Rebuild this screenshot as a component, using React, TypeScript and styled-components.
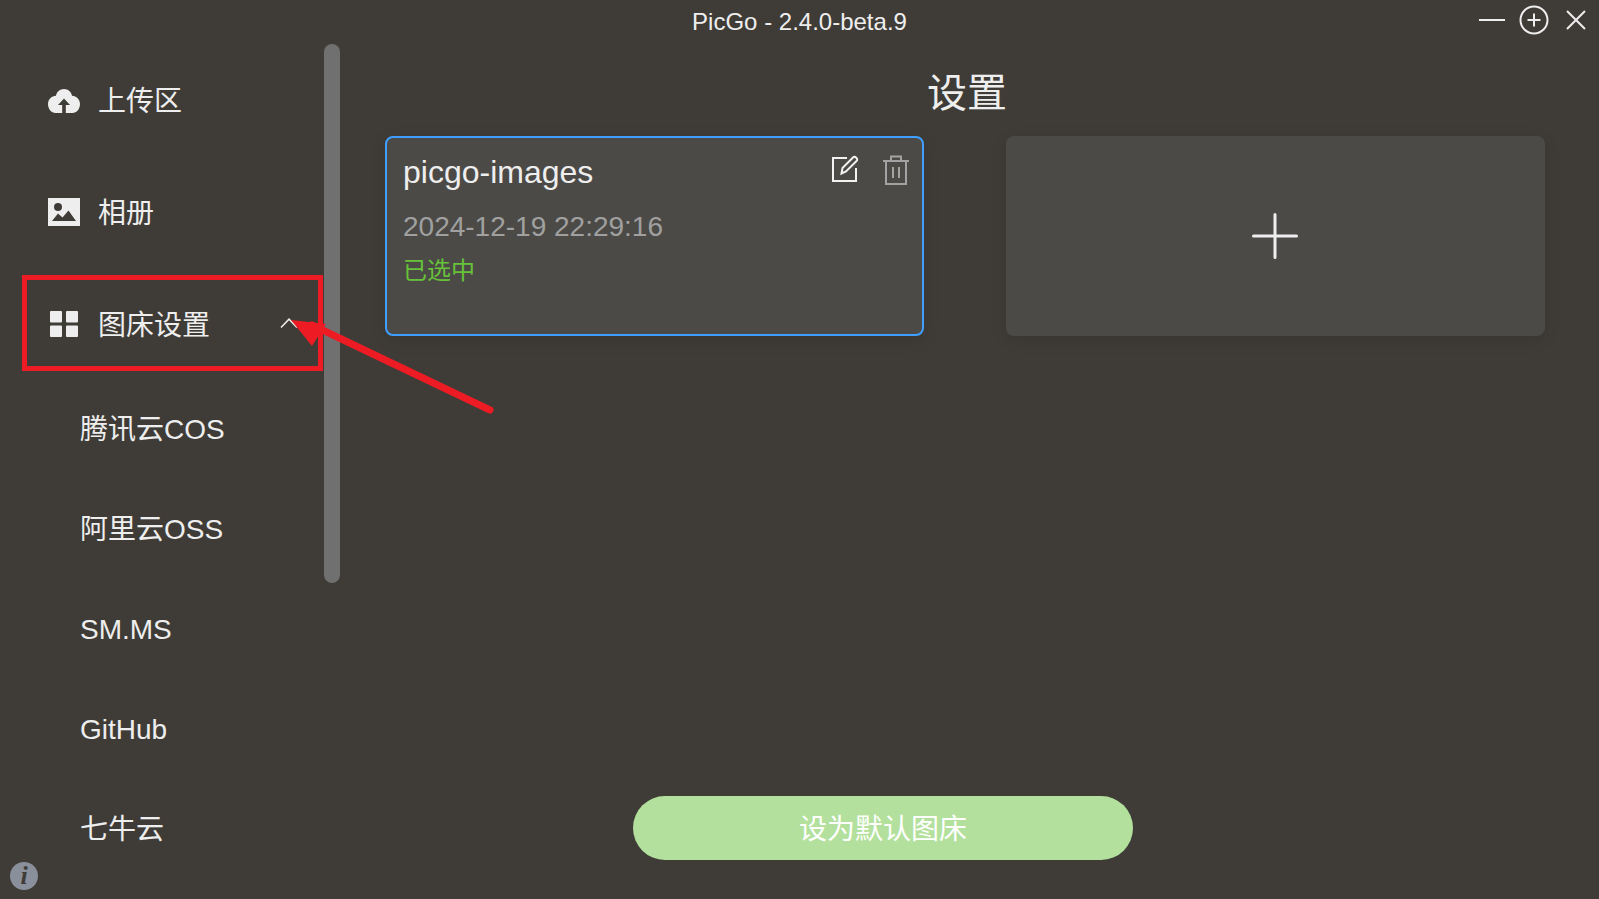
import styled, { createGlobalStyle } from 'styled-components';

const SANS = `"Liberation Sans", "Noto Sans CJK SC", sans-serif`;

const GlobalStyle = createGlobalStyle`
  html, body {
    margin: 0;
    padding: 0;
    background: #3f3c37;
  }

  * {
    box-sizing: border-box;
  }
`;

const PROVIDERS = ['腾讯云COS', '阿里云OSS', 'SM.MS', 'GitHub', '七牛云'];

const CloudIcon = () => (
  <svg width="32" height="32" viewBox="0 0 32 32" fill="#eee">
    <path d="M16 6c-4 0-7.300 2.800-8 6.700C3.500 13.100 0 16.400 0 21c0 5 3.400 9 7.500 9h6.700v-8H10l6-6.500 6 6.500h-4.200v8h6.700c4.100 0 7.500-4 7.500-9 0-4.600-3.500-7.900-8-8.300-.7-3.900-4-6.700-8-6.700z" />
  </svg>
);

const PictureIcon = () => (
  <svg width="32" height="32" viewBox="0 0 32 32">
    <path
      fill="#eee"
      fillRule="evenodd"
      d="M0 3h32v28H0zM4 26h24l-7.500-10.500-6 7-4.500-4zM10 8a4 4 0 1 0 0 8 4 4 0 0 0 0-8z"
    />
  </svg>
);

const GridIcon = () => (
  <svg width="32" height="32" viewBox="0 0 32 32" fill="#eee">
    <rect x="2" y="4" width="12" height="11.500" rx="1" />
    <rect x="18" y="4" width="12" height="11.500" rx="1" />
    <rect x="2" y="18.500" width="12" height="11.500" rx="1" />
    <rect x="18" y="18.500" width="12" height="11.500" rx="1" />
  </svg>
);

const Chevron = () => (
  <svg width="18" height="10" viewBox="0 0 18 10" fill="none" stroke="#eee" strokeWidth="1.500">
    <path d="M1 9.500 9 1.200l8 8.300" />
  </svg>
);

const EditIcon = () => (
  <svg width="28" height="28" viewBox="0 0 28 28" fill="none" stroke="#f2f2f2" strokeWidth="2">
    <path d="M16 3H2v23h23V13" />
    <path d="M10.500 18.500 11.500 13 22 2.500a2 2 0 0 1 3 0l.5.500a2 2 0 0 1 0 3L15 16.500z" />
  </svg>
);

const TrashIcon = () => (
  <svg width="26" height="30" viewBox="0 0 26 30" fill="none" stroke="#a3a3a3" strokeWidth="2">
    <path d="M0 6h26M8 6V1.500h10V6M3 6v23h20V6M10 12v11M16 12v11" />
  </svg>
);

const MinusIcon = () => (
  <svg width="28" height="28" viewBox="0 0 28 28" stroke="#eee" strokeWidth="2">
    <path d="M1 14h26" />
  </svg>
);

const CirclePlusIcon = () => (
  <svg width="30" height="30" viewBox="0 0 30 30" fill="none" stroke="#eee" strokeWidth="2">
    <circle cx="15" cy="15" r="13.500" />
    <path d="M15 8.500v13M8.500 15h13" />
  </svg>
);

const CloseIcon = () => (
  <svg width="22" height="22" viewBox="0 0 22 22" stroke="#eee" strokeWidth="2">
    <path d="M2 2l18 18M20 2 2 20" />
  </svg>
);

const PlusIcon = () => (
  <svg width="46" height="46" viewBox="0 0 46 46" stroke="#eee" strokeWidth="3" strokeLinecap="round">
    <path d="M23 1.500v43M1.500 23h43" />
  </svg>
);

const App = () => {
  return (
    <Page>
      <GlobalStyle />
      <TitleBar>
        <AppTitle>PicGo - 2.4.0-beta.9</AppTitle>
        <WindowControls>
          <MinusIcon />
          <CirclePlusIcon />
          <CloseSlot>
            <CloseIcon />
          </CloseSlot>
        </WindowControls>
      </TitleBar>
      <Body>
        <Sidebar>
          <Menu>
            <MenuItem>
              <CloudIcon />
              <span>上传区</span>
            </MenuItem>
            <MenuItem>
              <PictureIcon />
              <span>相册</span>
            </MenuItem>
            <MenuItem>
              <GridIcon />
              <span>图床设置</span>
              <ChevronSlot>
                <Chevron />
              </ChevronSlot>
            </MenuItem>
            {PROVIDERS.map((name) => (
              <SubItem key={name}>{name}</SubItem>
            ))}
          </Menu>
          <ScrollThumb />
        </Sidebar>
        <Main>
          <Heading>设置</Heading>
          <CardRow>
            <ConfigCard>
              <CardHead>
                <CardName>picgo-images</CardName>
                <CardActions>
                  <EditIcon />
                  <TrashIcon />
                </CardActions>
              </CardHead>
              <CardDate>2024-12-19 22:29:16</CardDate>
              <CardStatus>已选中</CardStatus>
            </ConfigCard>
            <AddCard>
              <PlusIcon />
            </AddCard>
          </CardRow>
          <Footer>
            <DefaultButton>设为默认图床</DefaultButton>
          </Footer>
        </Main>
      </Body>
      <InfoBadge>i</InfoBadge>
      <Annotation width="1599" height="899" viewBox="0 0 1599 899">
        <rect x="24.500" y="277.500" width="296" height="91" fill="none" stroke="#ed1c24" strokeWidth="5" />
        <path d="M490 410 312 325" stroke="#ed1c24" strokeWidth="7" strokeLinecap="round" />
        <path d="M291 320 326 324 312 346z" fill="#ed1c24" />
      </Annotation>
    </Page>
  );
};

const Page = styled.div`
  position: relative;
  display: flex;
  flex-direction: column;
  width: 1599px;
  height: 899px;
  overflow: hidden;
  background: #3f3c37;
  color: #eee;
  font-family: ${SANS};
`;

const TitleBar = styled.header`
  position: relative;
  display: flex;
  flex: none;
  justify-content: center;
  align-items: center;
  height: 43px;
`;

const AppTitle = styled.div`
  font-size: 24px;
  line-height: 43px;
`;

const WindowControls = styled.div`
  position: absolute;
  top: 5px;
  right: 12px;
  display: flex;
  align-items: center;
  gap: 13px;
  height: 30px;
`;

const CloseSlot = styled.div`
  display: flex;
  margin-left: 3px;
`;

const Body = styled.div`
  display: flex;
  flex: 1;
  min-height: 0;
`;

const Sidebar = styled.aside`
  display: flex;
  flex: none;
  width: 340px;
`;

const Menu = styled.nav`
  flex: none;
  width: 324px;
  overflow: hidden;
`;

const MenuItem = styled.div`
  display: flex;
  align-items: center;
  gap: 18px;
  height: 112px;
  padding-left: 48px;
  font-size: 28px;

  svg {
    flex: none;
  }
`;

const ChevronSlot = styled.div`
  display: flex;
  margin-left: auto;
  margin-right: 26px;
`;

const SubItem = styled.div`
  height: 100px;
  padding-left: 80px;
  font-size: 28px;
  line-height: 102px;
`;

const ScrollThumb = styled.div`
  flex: none;
  width: 16px;
  height: 539px;
  margin-top: 1px;
  border-radius: 8px;
  background: #707070;
`;

const Main = styled.main`
  display: flex;
  flex: 1;
  flex-direction: column;
  min-width: 0;
`;

const Heading = styled.h1`
  margin: 20px 0 0 587px;
  font-size: 40px;
  font-weight: 400;
  line-height: 60px;
`;

const CardRow = styled.div`
  display: flex;
  gap: 82px;
  margin-top: 13px;
  padding-left: 45px;
`;

const ConfigCard = styled.section`
  width: 539px;
  height: 200px;
  padding: 12px 13px 0 16px;
  border: 2px solid #409eff;
  border-radius: 8px;
  background: #4b4a46;
  box-shadow: 0 4px 16px rgba(0, 0, 0, 0.1);
`;

const CardHead = styled.div`
  display: flex;
  justify-content: space-between;
  align-items: flex-start;
`;

const CardName = styled.div`
  font-size: 32px;
  line-height: 44px;
  color: #eee;
`;

const CardActions = styled.div`
  display: flex;
  gap: 24px;
  margin-top: 5px;
`;

const CardDate = styled.div`
  margin-top: 16px;
  font-size: 28px;
  line-height: 34px;
  color: #a0a0a0;
`;

const CardStatus = styled.div`
  margin-top: 10px;
  font-size: 24px;
  line-height: 34px;
  color: #67c23a;
`;

const AddCard = styled.button`
  display: flex;
  justify-content: center;
  align-items: center;
  width: 539px;
  height: 200px;
  padding: 0 2px 0 0;
  border: none;
  border-radius: 8px;
  background: #4b4a46;
  box-shadow: 0 4px 16px rgba(0, 0, 0, 0.1);
`;

const Footer = styled.div`
  display: flex;
  margin-top: auto;
  padding: 0 0 39px 293px;
`;

const DefaultButton = styled.button`
  width: 500px;
  height: 64px;
  padding: 0 0 2px;
  border: none;
  border-radius: 32px;
  background: #b3e19d;
  color: #fff;
  font-family: ${SANS};
  font-size: 28px;
`;

const InfoBadge = styled.div`
  position: absolute;
  left: 10px;
  bottom: 9px;
  width: 28px;
  height: 28px;
  border-radius: 50%;
  background: #8a8f9c;
  color: #3f3c37;
  font-family: "Liberation Serif", serif;
  font-size: 26px;
  font-style: italic;
  font-weight: 700;
  line-height: 28px;
  text-align: center;
`;

const Annotation = styled.svg`
  position: absolute;
  top: 0;
  left: 0;
  pointer-events: none;
`;

export default App;
